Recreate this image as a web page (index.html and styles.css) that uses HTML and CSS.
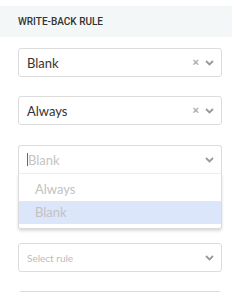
FILE: index.html
```html
<!DOCTYPE html>
<html lang="en">
<head>
    <meta charset="UTF-8">
    <meta name="viewport" content="width=device-width, initial-scale=1.0">
    <title>Write-back rule</title>
    <link rel="stylesheet" href="styles.css">
</head>
<body>

<div class="panel">
    <div class="panel-header">WRITE-BACK RULE</div>

    <div class="rules">
        <div class="select">
            <span class="value">Blank</span>
            <span class="clear">&times;</span>
            <svg class="chevron" width="9" height="6" viewBox="0 0 9 6"><path d="M1 1l3.5 3.5L8 1" fill="none" stroke="#999" stroke-width="1.8"/></svg>
        </div>

        <div class="select">
            <span class="value">Always</span>
            <span class="clear">&times;</span>
            <svg class="chevron" width="9" height="6" viewBox="0 0 9 6"><path d="M1 1l3.5 3.5L8 1" fill="none" stroke="#999" stroke-width="1.8"/></svg>
        </div>

        <!-- open one -->
        <div class="select-open">
            <div class="select is-open">
                <span class="caret"></span>
                <span class="value placeholder">Blank</span>
                <svg class="chevron" width="9" height="6" viewBox="0 0 9 6"><path d="M1 1l3.5 3.5L8 1" fill="none" stroke="#999" stroke-width="1.8"/></svg>
            </div>
            <ul class="menu">
                <li class="option">Always</li>
                <li class="option focused">Blank</li>
            </ul>
        </div>

        <div class="select">
            <span class="value small-placeholder">Select rule</span>
            <svg class="chevron" width="9" height="6" viewBox="0 0 9 6"><path d="M1 1l3.5 3.5L8 1" fill="none" stroke="#999" stroke-width="1.8"/></svg>
        </div>

        <div class="select"></div>
    </div>
</div>

</body>
</html>
```

FILE: styles.css
```css
body {
    margin: 0;
    background-color: white;
    font-family: Lato, "Open Sans", Arial, sans-serif;
    overflow: hidden;
}

.panel {
    padding-top: 6px;
}

.panel-header {
    width: 214px;
    height: 31px;
    padding-left: 18px;
    background-color: #f4f7f8;
    font-family: Roboto, Arial, sans-serif;
    font-size: 10px;
    font-weight: 500;
    color: #333;
    display: flex;
    align-items: center;
}

.rules {
    padding: 11px 0 0 18px;
    width: 204px;
    display: flex;
    flex-direction: column;
    gap: 19px;
}

.select {
    height: 29px;
    box-sizing: border-box;
    border: 1px solid #dcdcdc;
    border-radius: 3px;
    display: flex;
    align-items: center;
    padding: 0 7px 0 8px;
}

.value {
    flex: 1;
    font-size: 13px;
    color: #333;
}

.placeholder {
    color: #c4c4c4;
}

.small-placeholder {
    font-size: 10px;
    color: #bbb;
}

.caret {
    width: 1px;
    height: 13px;
    background-color: #666;
}

.clear {
    font-family: Arial, sans-serif;
    font-size: 11px;
    font-weight: bold;
    color: #aaa;
    margin-right: 6px;
    line-height: 1;
}

.chevron {
    display: block;
}

.select-open {
    margin-top: 1px;
}

.select.is-open {
    height: 28px;
    border-bottom: none;
    border-radius: 3px 3px 0 0;
}

.menu {
    list-style: none;
    margin: 0 0 -5px 0;
    padding: 4px 0 4px 0;
    border: 1px solid #dcdcdc;
    border-top: 1px solid #eee;
    border-radius: 0 0 3px 3px;
    box-shadow: 0 2px 3px rgba(0, 0, 0, 0.15);
}

.option {
    height: 23px;
    line-height: 23px;
    padding-left: 16px;
    font-size: 13px;
    color: #c2c2c2;
}

.option.focused {
    background-color: #dce6fb;
}
```
